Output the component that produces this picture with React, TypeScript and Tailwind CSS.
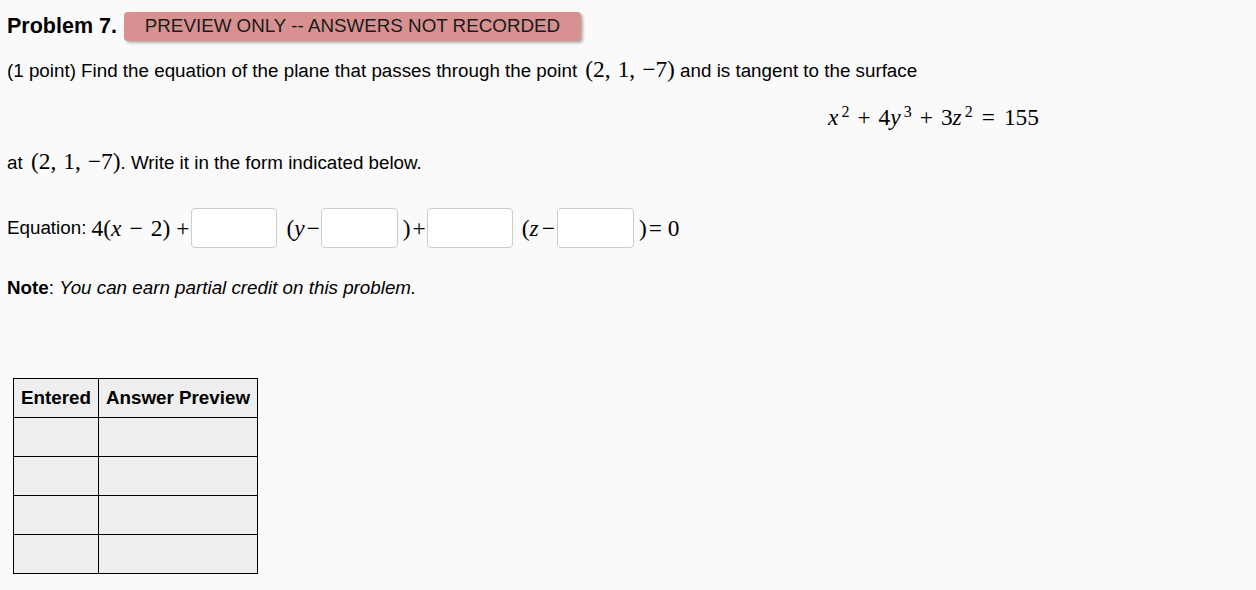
import React from 'react';

const M = ({ children }: { children: React.ReactNode }) => (
  <span className="font-['Liberation_Serif',serif] text-[23.4px]">{children}</span>
);

const V = ({ children }: { children: React.ReactNode }) => (
  <span className="italic">{children}</span>
);

const Op = ({ children }: { children: React.ReactNode }) => (
  <span className="mx-[8px]">{children}</span>
);

const Sup = ({ children }: { children: React.ReactNode }) => (
  <sup className="ml-[3px] text-[16px]">{children}</sup>
);

const Blank = ({ w }: { w: string }) => (
  <input type="text" className={`h-[40px] ${w} rounded border border-[#cccccc] bg-white`} />
);

const Point = () => (
  <span className="ml-[3px]">
    <M>
      (2,<span className="ml-[7px]">1,</span>
      <span className="ml-[7px]">−7)</span>
    </M>
  </span>
);

const App: React.FC = () => {
  return (
    <div className="min-h-[590px] bg-[#fafafa] px-[7px] pt-[10px] font-['Liberation_Sans',Arial,sans-serif] text-[18.8px] text-black">
      <div className="flex items-center gap-[7px]">
        <h2 className="text-[21.5px] font-bold">Problem 7.</h2>
        <div className="flex h-[29px] w-[457px] items-center justify-center rounded-[4px] bg-[#d79191] text-[18.8px] text-[#1a1a1a] shadow-[2px_2px_3px_rgba(0,0,0,0.3)]">
          PREVIEW ONLY -- ANSWERS NOT RECORDED
        </div>
      </div>

      <p className="mt-[12px] leading-[30px]">
        (1 point) Find the equation of the plane that passes through the point <Point /> and is tangent to the surface
      </p>

      <div className="mt-[16px] pl-[821px] leading-[30px]">
        <M>
          <V>x</V>
          <Sup>2</Sup>
          <Op>+</Op>4<V>y</V>
          <Sup>3</Sup>
          <Op>+</Op>3<V>z</V>
          <Sup>2</Sup>
          <span className="mx-[9px]">=</span>155
        </M>
      </div>

      <p className="mt-[12px] leading-[30px]">
        at <Point />. Write it in the form indicated below.
      </p>

      <div className="mt-[30px] flex items-center">
        <span>Equation:&nbsp;</span>
        <M>
          4(<V>x</V>
          <Op>−</Op>2)<span className="ml-[6px] mr-[2px]">+</span>
        </M>
        <Blank w="w-[86px]" />
        <M>
          <span className="ml-[9px]">(</span>
          <V>y</V>
          <span className="ml-[2px] mr-[1px]">−</span>
        </M>
        <Blank w="w-[77px]" />
        <M>
          <span className="ml-[5px]">)</span>
          <span className="ml-[2px] mr-[1px]">+</span>
        </M>
        <Blank w="w-[86px]" />
        <M>
          <span className="ml-[9px]">(</span>
          <V>z</V>
          <span className="ml-[3px] mr-[2px]">−</span>
        </M>
        <Blank w="w-[77px]" />
        <M>
          <span className="ml-[5px]">)</span>
          <span className="ml-[2px]">= 0</span>
        </M>
      </div>

      <p className="mt-[26px]">
        <b>Note</b>: <i>You can earn partial credit on this problem.</i>
      </p>

      <table className="ml-[6px] mt-[76px] border-collapse bg-[#eeeeee]">
        <thead>
          <tr>
            <th className="h-[39px] border border-black px-[7px] text-left font-bold">Entered</th>
            <th className="h-[39px] border border-black px-[7px] text-left font-bold">Answer Preview</th>
          </tr>
        </thead>
        <tbody>
          {[0, 1, 2, 3].map((i) => (
            <tr key={i}>
              <td className="h-[39px] border border-black"></td>
              <td className="h-[39px] border border-black"></td>
            </tr>
          ))}
        </tbody>
      </table>
    </div>
  );
};

export default App;
